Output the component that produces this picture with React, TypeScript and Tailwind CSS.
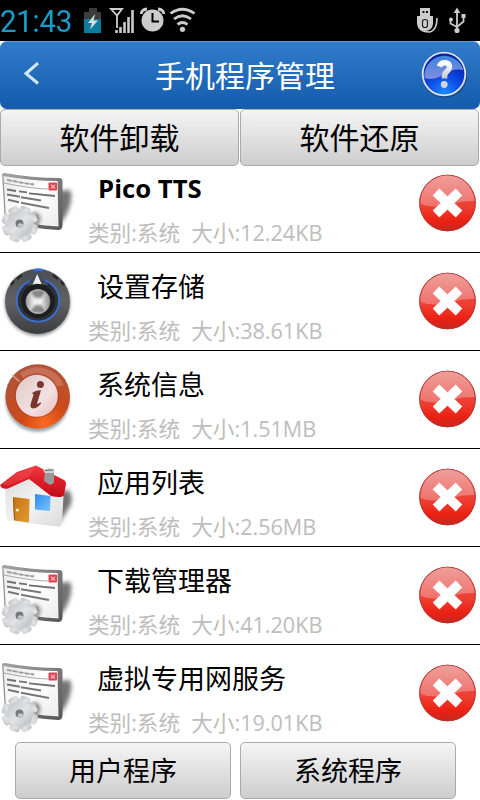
import { useState } from 'react';
import type { ReactNode } from 'react';

type IconKind = 'window' | 'knob' | 'info' | 'house';

interface AppInfo {
  name: string;
  size: string;
  icon: IconKind;
}

const APPS: AppInfo[] = [
  { name: 'Pico TTS', size: '12.24KB', icon: 'window' },
  { name: '设置存储', size: '38.61KB', icon: 'knob' },
  { name: '系统信息', size: '1.51MB', icon: 'info' },
  { name: '应用列表', size: '2.56MB', icon: 'house' },
  { name: '下载管理器', size: '41.20KB', icon: 'window' },
  { name: '虚拟专用网服务', size: '19.01KB', icon: 'window' },
];

const GEAR_ANGLES = [0, 45, 90, 135, 180, 225, 270, 315];

function WindowIcon() {
  return (
    <svg width="76" height="97" viewBox="0 0 76 97">
      <defs>
        <linearGradient id="winEdge" x1="0" y1="0" x2="1" y2="1">
          <stop offset="0" stopColor="#a5a5a5" />
          <stop offset="1" stopColor="#555" />
        </linearGradient>
        <linearGradient id="winPage" x1="0" y1="0" x2="1" y2="1">
          <stop offset="0" stopColor="#e8e8e8" />
          <stop offset="0.5" stopColor="#fff" />
          <stop offset="1" stopColor="#ececec" />
        </linearGradient>
        <linearGradient id="winGear" x1="0" y1="0" x2="1" y2="1">
          <stop offset="0" stopColor="#bfc1c3" />
          <stop offset="0.5" stopColor="#e2e3e5" />
          <stop offset="1" stopColor="#b5b6b8" />
        </linearGradient>
        <filter id="winBlur" x="-50%" y="-50%" width="200%" height="200%">
          <feGaussianBlur stdDeviation="2" />
        </filter>
      </defs>
      <path d="M58 36 L70 35 Q73 42 69 53 Q66 64 56 72 Z" fill="#444" opacity="0.75" filter="url(#winBlur)" />
      <path d="M2 20 Q2 17.5 5 18 Q32 23 59 23 Q62.5 23 62.5 26 L62.5 70 Q62.5 75 58 75 Q32 74 5 66 Z" fill="url(#winEdge)" />
      <path d="M3.5 21 Q32 26 57.5 26 L58.5 71.5 Q32 70 6 64 Z" fill="url(#winPage)" />
      <path d="M4 28 Q30 33.5 48 34" fill="none" stroke="#aaa" strokeWidth="1.2" />
      <path d="M7 24.8 Q20 27.5 34 29.5" fill="none" stroke="#999" strokeWidth="1.8" strokeDasharray="5 1" />
      <rect x="48.5" y="27.5" width="8.5" height="8" rx="1" fill="#df4252" />
      <path d="M51 29.7 L55 33.5 M55 29.7 L51 33.5" stroke="#f8b3b8" strokeWidth="1.3" />
      <path d="M7 34.5 L16 36 M19 36.4 L27 37.4 M29 38.4 L55 41" stroke="#707070" strokeWidth="1.9" />
      <path d="M7 39.5 L20 41.8 M21 42.2 L41 45.5" stroke="#777" strokeWidth="1.9" />
      <path d="M8 44.8 L19 47.2 M21 47.7 L49 53" stroke="#777" strokeWidth="1.9" />
      <ellipse cx="35" cy="64" rx="5" ry="6.5" fill="#444" opacity="0.75" filter="url(#winBlur)" />
      <g fill="url(#winGear)" stroke="#b8b8b8" strokeWidth="0.4">
        {GEAR_ANGLES.map((a) => (
          <rect key={a} x="15" y="51" width="10" height="10" rx="2.5" transform={`rotate(${a + 20} 20 69)`} />
        ))}
      </g>
      <circle cx="20" cy="69" r="13" fill="url(#winGear)" />
      <ellipse cx="19.5" cy="68.5" rx="4" ry="4" fill="#76787a" />
      <ellipse cx="20.5" cy="70.5" rx="2.8" ry="2.2" fill="#c3c4c6" />
    </svg>
  );
}

function KnobIcon() {
  return (
    <svg width="76" height="97" viewBox="0 0 76 97">
      <defs>
        <linearGradient id="knobBody" x1="0" y1="0" x2="0" y2="1">
          <stop offset="0" stopColor="#4c4d50" />
          <stop offset="0.5" stopColor="#606164" />
          <stop offset="1" stopColor="#3b3c3f" />
        </linearGradient>
        <linearGradient id="knobMetal" x1="0" y1="0" x2="1" y2="0">
          <stop offset="0" stopColor="#999" />
          <stop offset="0.25" stopColor="#d8d8d8" />
          <stop offset="0.5" stopColor="#f4f4f4" />
          <stop offset="0.75" stopColor="#c8c8c8" />
          <stop offset="1" stopColor="#888" />
        </linearGradient>
        <filter id="knobBlur" x="-20%" y="-20%" width="140%" height="140%">
          <feGaussianBlur stdDeviation="1.5" />
        </filter>
        <filter id="knobSoft" x="-20%" y="-20%" width="140%" height="140%">
          <feGaussianBlur stdDeviation="0.9" />
        </filter>
      </defs>
      <circle cx="37.5" cy="50" r="33" fill="#555" opacity="0.6" filter="url(#knobBlur)" />
      <circle cx="37.5" cy="48.5" r="32.5" fill="url(#knobBody)" />
      <path d="M17 26 L22 22 M11 32 L14 28 M53 22 L58 26 M61 28 L64 32" stroke="#2a2b2e" strokeWidth="2.4" />
      <path d="M34 17.2 Q38 15.6 43 17.2" fill="none" stroke="#3c70dd" strokeWidth="2.5" />
      <circle cx="38" cy="47.5" r="21.2" fill="#303134" stroke="#3c6fd6" strokeWidth="1.8" />
      <path d="M27 32 L37 18 L48 32 Z" fill="#4a4b4e" />
      <path d="M27 32 L37 18 L48 32" fill="none" stroke="#38549a" strokeWidth="0.9" />
      <path d="M32.5 32 L37.2 21 L42 32 Q37 29.5 32.5 32 Z" fill="#eee" />
      <circle cx="38" cy="48" r="17" fill="#1d1e21" />
      <circle cx="38" cy="48.5" r="12.3" fill="url(#knobMetal)" />
      <path d="M38 48.5 L31 39 A12 12 0 0 1 45 39 Z M38 48.5 L31 58 A12 12 0 0 0 45 58 Z" fill="#444" opacity="0.6" filter="url(#knobSoft)" />
      <circle cx="38" cy="48.5" r="4" fill="#fff" opacity="0.7" filter="url(#knobSoft)" />
    </svg>
  );
}

function InfoIcon() {
  return (
    <svg width="76" height="97" viewBox="0 0 76 97">
      <defs>
        <radialGradient id="infoRing" cx="0.6" cy="0.92" r="0.85">
          <stop offset="0" stopColor="#fb6a20" />
          <stop offset="0.4" stopColor="#cf4a18" />
          <stop offset="1" stopColor="#b0533a" />
        </radialGradient>
        <linearGradient id="infoFace" x1="0" y1="0" x2="1" y2="1">
          <stop offset="0" stopColor="#dfc9c7" />
          <stop offset="0.6" stopColor="#f3e0e1" />
          <stop offset="1" stopColor="#e7bdb9" />
        </linearGradient>
        <filter id="infoBlur" x="-20%" y="-20%" width="140%" height="140%">
          <feGaussianBlur stdDeviation="1.8" />
        </filter>
      </defs>
      <circle cx="37.5" cy="49" r="32" fill="#71808b" opacity="0.7" filter="url(#infoBlur)" />
      <circle cx="37.7" cy="45.5" r="32.3" fill="url(#infoRing)" />
      <path d="M20 22 A29 29 0 0 1 64 34 L56 36 A21 21 0 0 0 24 29 Z" fill="#e39a80" opacity="0.4" />
      <path d="M12 24 L20 31" stroke="#eab8a4" strokeWidth="1.3" opacity="0.8" />
      <circle cx="36.8" cy="44.5" r="22.2" fill="#a53c1c" opacity="0.6" />
      <circle cx="36.8" cy="44.8" r="21" fill="url(#infoFace)" />
      <circle cx="40.4" cy="33.5" r="3.5" fill="#78362c" />
      <path d="M31.5 43 Q34 39.5 41 39.2 L37.2 52 Q36.8 54.2 40.5 51.2 L41.2 52.2 Q36.5 58 32.5 57.3 Q29.5 56.5 30.8 52.5 L33.5 43.8 Q33.8 42.2 31.5 43 Z" fill="#78362c" />
    </svg>
  );
}

function HouseIcon() {
  return (
    <svg width="76" height="97" viewBox="0 0 76 97">
      <defs>
        <linearGradient id="houseRoof" x1="0" y1="0" x2="0" y2="1">
          <stop offset="0" stopColor="#f5383f" />
          <stop offset="0.5" stopColor="#dc1d29" />
          <stop offset="1" stopColor="#c30c1a" />
        </linearGradient>
        <linearGradient id="houseWall" x1="0" y1="0" x2="1" y2="1">
          <stop offset="0" stopColor="#dcdcdc" />
          <stop offset="0.5" stopColor="#f4f4f4" />
          <stop offset="1" stopColor="#dadada" />
        </linearGradient>
        <linearGradient id="houseDoor" x1="0" y1="0" x2="1" y2="1">
          <stop offset="0" stopColor="#c6720d" />
          <stop offset="1" stopColor="#e39a35" />
        </linearGradient>
        <linearGradient id="houseGlass" x1="0" y1="0" x2="1" y2="1">
          <stop offset="0" stopColor="#2b8ceb" />
          <stop offset="1" stopColor="#78c6fb" />
        </linearGradient>
        <filter id="houseBlur" x="-50%" y="-50%" width="200%" height="200%">
          <feGaussianBlur stdDeviation="2" />
        </filter>
      </defs>
      <path d="M59 43 L69 41 Q74 49 70 57 L59 75 Z" fill="#444" opacity="0.75" filter="url(#houseBlur)" />
      <path d="M5 38 L29 27 L50 45 L63.5 46 L62 74 Q61 78 58 77.5 L9 72 Q6 71 6 66 Z" fill="url(#houseWall)" />
      <path d="M0 36 L17 23 L36 16.5 L64 31 Q66 32 66 35 L64 46 Q62 49.5 51 47 L29 30 L8 39.5 Q2 41 0 36 Z" fill="url(#houseRoof)" />
      <path d="M2 35 L18 24 L35 18 L29 28 L8 37 Z" fill="#f66464" opacity="0.3" />
      <path d="M45 22 L54 20.5 L54 34 L50 36 L44 32 Z" fill="#999" />
      <path d="M43 21 L49 19 L55 20.5 L54 24 L45 24 Z" fill="#d0d0d0" />
      <path d="M45 21.5 L53 21" stroke="#666" strokeWidth="1.2" />
      <path d="M13 48 L29.5 50 L29 73.5 L14 71.5 Z" fill="url(#houseDoor)" />
      <path d="M13.5 49 L14.5 71" stroke="#9f5b0e" strokeWidth="1" />
      <circle cx="17.3" cy="61" r="1.6" fill="#fff0c6" />
      <path d="M35 45 L50.5 47 L50 62 L35 60.5 Z" fill="url(#houseGlass)" />
    </svg>
  );
}

const ICONS: Record<IconKind, () => ReactNode> = {
  window: WindowIcon,
  knob: KnobIcon,
  info: InfoIcon,
  house: HouseIcon,
};

function DeleteIcon() {
  return (
    <svg width="60" height="60" viewBox="0 0 60 60">
      <defs>
        <linearGradient id="delBase" x1="0" y1="0" x2="0" y2="1">
          <stop offset="0" stopColor="#d84a4a" />
          <stop offset="0.55" stopColor="#ef4034" />
          <stop offset="0.8" stopColor="#ec2214" />
          <stop offset="1" stopColor="#c8261f" />
        </linearGradient>
        <linearGradient id="delShine" x1="0" y1="0" x2="0" y2="1">
          <stop offset="0" stopColor="#ef9f9b" />
          <stop offset="1" stopColor="#f0706a" />
        </linearGradient>
      </defs>
      <circle cx="29.5" cy="30" r="28.3" fill="url(#delBase)" />
      <circle cx="29.5" cy="30" r="27.8" fill="none" stroke="#a83a3c" strokeWidth="0.9" />
      <path d="M2.5 31 A27 27 0 0 1 56.5 28 Q43 28 33 31 Q16 36 2.5 31 Z" fill="url(#delShine)" />
      <path d="M18 19 L41 41 M41 19 L18 41" stroke="#fff" strokeWidth="9.5" />
    </svg>
  );
}

function HelpIcon() {
  return (
    <svg className="-mt-[3px]" width="48" height="48" viewBox="0 0 48 48">
      <defs>
        <radialGradient id="helpBase" cx="0.5" cy="0.95" r="0.8">
          <stop offset="0" stopColor="#1a8cff" />
          <stop offset="0.5" stopColor="#0b4be6" />
          <stop offset="1" stopColor="#0a20a8" />
        </radialGradient>
        <linearGradient id="helpShine" x1="0" y1="0" x2="0" y2="1">
          <stop offset="0" stopColor="#3f86dd" />
          <stop offset="1" stopColor="#7f8ce2" />
        </linearGradient>
        <linearGradient id="helpMark" x1="0" y1="0" x2="0" y2="1">
          <stop offset="0" stopColor="#fff" />
          <stop offset="1" stopColor="#c4c6ce" />
        </linearGradient>
      </defs>
      <circle cx="24.5" cy="25.2" r="22.6" fill="#123b74" opacity="0.7" />
      <circle cx="24" cy="24" r="21.3" fill="url(#helpBase)" stroke="#e4e4e2" strokeWidth="1.8" />
      <path d="M4.5 28 A20 20 0 0 1 43.5 20 Q33 18 24 24 Q14 31 4.5 28 Z" fill="url(#helpShine)" />
      <path
        d="M19.3 16.5 Q21 12.5 25 12.7 Q30.5 13 29.3 18 Q28.5 20.5 26 22.3 Q24.3 24 24.5 28.5"
        fill="none"
        stroke="url(#helpMark)"
        strokeWidth="5.6"
      />
      <circle cx="24.2" cy="34.5" r="3.4" fill="#d6d7dc" />
    </svg>
  );
}

function StatusBar() {
  return (
    <div className="flex h-[41px] shrink-0 items-center bg-black">
      <div className="flex h-full w-[72px] items-center overflow-visible">
        <span className="origin-left scale-x-[0.92] whitespace-nowrap font-['Roboto'] text-[32px] font-normal leading-none tracking-[-0.3px] text-[#1a9cc8]">
          21:43
        </span>
      </div>
      <svg width="126" height="41" viewBox="72 0 126 41">
        <path d="M89 8 h8 v4 h4 v10 H84 V12 h5 Z" fill="#3c3c3c" />
        <rect x="84" y="19" width="17" height="14" fill="#0c7c9e" />
        <path d="M95 14 L88 23 H92 L90 29.5 L98 20.5 H93.5 Z" fill="#ddd" />
        <path d="M111 9 H122 L117 15.5 Z M117 14 V28" fill="none" stroke="#ccc" strokeWidth="1.8" />
        <path d="M116.5 30 V33 M120.5 27 V33 M124.5 22 V33 M128.5 17 V33 M132.5 10 V33" stroke="#ccc" strokeWidth="2.6" />
        <circle cx="152.5" cy="20.5" r="11" fill="#ccc" />
        <path d="M141.2 14 Q141.5 9.5 147 9 M158 9 Q163.5 9.5 163.8 14" fill="none" stroke="#ccc" strokeWidth="2.8" />
        <path d="M152.5 13 V21.5 H159" fill="none" stroke="#000" strokeWidth="2" />
        <circle cx="182.5" cy="29.3" r="2.6" fill="#ccc" />
        <path d="M170.5 13.5 Q182.5 5 194.5 13.5 M174 19 Q182.5 12.5 191 19 M177.5 24.5 Q182.5 20.5 187.5 24.5" fill="none" stroke="#ccc" strokeWidth="2.7" />
      </svg>
      <svg className="ml-auto" width="70" height="41" viewBox="410 0 70 41">
        <path d="M420 8 h10 v8 h-10 Z" fill="#ccc" />
        <path d="M422.5 11 h2 v2 h-2 Z M426 11 h2 v2 h-2 Z" fill="#111" />
        <path d="M417 16 H433 V24 Q432 31 425 31 Q418 31 417 24 Z" fill="#ccc" />
        <rect x="422.5" y="19.5" width="5" height="8" rx="2.2" fill="#ccc" stroke="#222" strokeWidth="1.2" />
        <path d="M419 27 Q421 32 430 32 Q437 30 437 18" fill="none" stroke="#ccc" strokeWidth="1.6" />
        <path d="M457 10 V31 M450.5 20 V23.5 L457 27 L463.5 21.5 V16" fill="none" stroke="#ccc" strokeWidth="1.8" />
        <path d="M457 7.5 L460.3 13 H453.7 Z" fill="#ccc" />
        <circle cx="451" cy="19.5" r="2" fill="#ccc" />
        <rect x="461.5" y="14" width="4" height="4" fill="#ccc" />
        <circle cx="457" cy="30.5" r="2.6" fill="#ccc" />
      </svg>
    </div>
  );
}

function GreyButton({ className, onClick, children }: { className: string; onClick?: () => void; children: ReactNode }) {
  return (
    <button
      onClick={onClick}
      className={`flex h-[57px] items-center justify-center rounded-[5px] border border-[#aaa] bg-linear-to-b from-[#f5f5f5] to-[#cdcdcd] leading-none text-black ${className}`}
    >
      {children}
    </button>
  );
}

function AppRow({ app, onDelete }: { app: AppInfo; onDelete: () => void }) {
  const Icon = ICONS[app.icon];
  const latin = app.name === 'Pico TTS';
  return (
    <div className="flex h-[98px] shrink-0 border-b border-black">
      <div className="w-[76px] shrink-0">
        <Icon />
      </div>
      <div className="min-w-0 flex-1 whitespace-nowrap pl-3">
        <p className={`mt-[14px] h-10 leading-10 text-black ${latin ? 'pl-[10px] text-[25.7px] font-bold' : 'pl-[9px] text-[27px]'}`}>
          {app.name}
        </p>
        <p className="mt-[9px] h-[30px] whitespace-pre text-[21.6px] leading-[30px] text-[#bdbdbd]">
          {`类别:系统  大小:${app.size}`}
        </p>
      </div>
      <button onClick={onDelete} aria-label="delete" className="mr-[2px] mt-[18px] h-[60px] w-[60px] shrink-0">
        <DeleteIcon />
      </button>
    </div>
  );
}

export default function App() {
  const [apps, setApps] = useState<AppInfo[]>(APPS);

  return (
    <div className="flex h-[800px] w-[480px] flex-col overflow-hidden bg-white font-['Open_Sans','Noto_Sans_CJK_SC',sans-serif]">
      <StatusBar />

      {/* Title bar */}
      <div className="flex h-[68px] shrink-0 items-center justify-between rounded-[7px] border-t border-[#5a9bdc] bg-linear-to-b from-[#307ccb] to-[#135bab] pl-[22px] pr-3">
        <svg className="-mt-[3px]" width="48" height="24" viewBox="0 0 48 24">
          <path d="M16 1 L4 11.5 L16 21.5" fill="none" stroke="#d5e5f7" strokeWidth="3" />
        </svg>
        <h1 className="text-[30px] leading-none text-white">手机程序管理</h1>
        <HelpIcon />
      </div>

      {/* Mode tabs */}
      <div className="flex shrink-0 gap-px">
        <GreyButton className="w-[239px] text-[30px]">软件卸载</GreyButton>
        <GreyButton className="w-[239px] text-[30px]">软件还原</GreyButton>
      </div>

      {/* App list, scrolled slightly under the tabs */}
      <div className="flex h-[576px] shrink-0 flex-col overflow-hidden">
        <div className="-mt-[11px] flex flex-col">
          {apps.map((app) => (
            <AppRow key={app.name} app={app} onDelete={() => setApps(apps.filter((a) => a.name !== app.name))} />
          ))}
        </div>
      </div>

      <div className="flex shrink-0 gap-[9px] pl-[15px]">
        <GreyButton className="w-[216px] text-[27px]">用户程序</GreyButton>
        <GreyButton className="w-[216px] text-[27px]">系统程序</GreyButton>
      </div>
    </div>
  );
}
